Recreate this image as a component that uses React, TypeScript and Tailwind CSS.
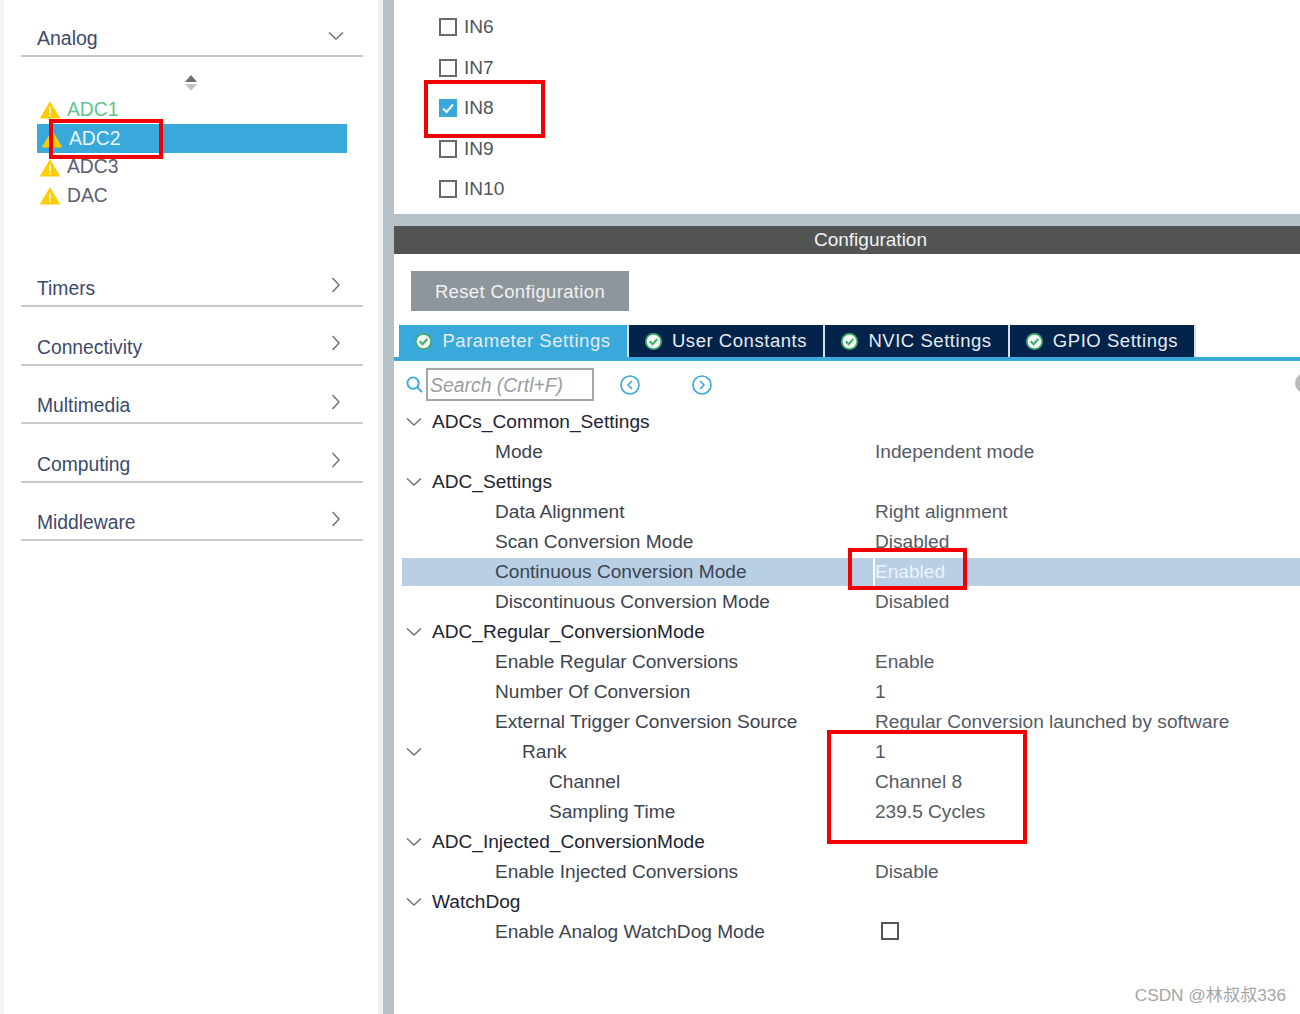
import React from "react";

const font = { fontFamily: '"Liberation Sans", "Noto Sans CJK SC", sans-serif' };

const Warn = () => (
  <svg viewBox="0 0 20 18" className="w-[20px] h-[18px] shrink-0">
    <path d="M10 1 L19.5 17 H0.5 Z" fill="#ffcc00" stroke="#ffcc00" strokeWidth="1" strokeLinejoin="round" />
    <rect x="9.2" y="6" width="1.6" height="6.5" fill="#fff" />
    <rect x="9.2" y="13.6" width="1.6" height="1.8" fill="#fff" />
  </svg>
);

const Chevron = ({ dir = "down", className = "" }: { dir?: "down" | "right"; className?: string }) => (
  <svg viewBox="0 0 16 16" className={`w-[16px] h-[16px] ${className}`} fill="none" stroke="#6b6f76" strokeWidth="1.4">
    {dir === "down" ? <path d="M1 4.5 L8 11 L15 4.5" /> : <path d="M4.5 1 L11 8 L4.5 15" />}
  </svg>
);

const Check = () => (
  <svg viewBox="0 0 18 18" className="w-[17px] h-[17px] shrink-0">
    <circle cx="9" cy="9" r="9" fill="#3fae6e" />
    <circle cx="9" cy="9" r="7.2" fill="#f4f8f6" />
    <path d="M5 8.8 L8 11.8 L13 6.4" fill="none" stroke="#3fae6e" strokeWidth="2.2" />
  </svg>
);

const Section = ({ label }: { label: string }) => (
  <div className="mt-[23.5px] h-[35px] flex items-center justify-between border-b-2 border-[#c5cbd0] pl-[16px] pr-[19px] pt-[2px]">
    <span className="text-[19.3px] text-[#3b4a6b]">{label}</span>
    <Chevron dir="right" className="-mt-[10px]" />
  </div>
);

const In = ({ label, on }: { label: string; on?: boolean }) => (
  <div className="h-[40.5px] flex items-center gap-[7px] pl-[45px]">
    {on ? (
      <span className="w-[18px] h-[18px] bg-[#39a9dc] flex items-center justify-center">
        <svg viewBox="0 0 18 18" className="w-[18px] h-[18px]" fill="none" stroke="#fff" strokeWidth="2">
          <path d="M4 9.5 L7.5 13 L14 5.5" />
        </svg>
      </span>
    ) : (
      <span className="w-[18px] h-[18px] border-2 border-[#6a6a6a]" />
    )}
    <span className="text-[19.1px] text-[#4f5560] mt-[1px]">{label}</span>
  </div>
);

const Tab = ({ label, active, w }: { label: string; active?: boolean; w: string }) => (
  <div
    className={`h-[32px] flex items-center justify-center gap-[10px] border-r-2 border-[#d8dfe4] tracking-[0.54px] text-[18.5px] text-[#e6ecf1] ${w} ${
      active ? "bg-[#39a9dc]" : "bg-[#03234b]"
    }`}
  >
    <Check />
    <span>{label}</span>
  </div>
);

type Row = { label: string; value?: string; indent: number; chev?: boolean; head?: boolean; sel?: boolean; box?: boolean };

const rows: Row[] = [
  { label: "ADCs_Common_Settings", indent: 30, chev: true, head: true },
  { label: "Mode", value: "Independent mode", indent: 93 },
  { label: "ADC_Settings", indent: 30, chev: true, head: true },
  { label: "Data Alignment", value: "Right alignment", indent: 93 },
  { label: "Scan Conversion Mode", value: "Disabled", indent: 93 },
  { label: "Continuous Conversion Mode", value: "Enabled", indent: 93, sel: true },
  { label: "Discontinuous Conversion Mode", value: "Disabled", indent: 93 },
  { label: "ADC_Regular_ConversionMode", indent: 30, chev: true, head: true },
  { label: "Enable Regular Conversions", value: "Enable", indent: 93 },
  { label: "Number Of Conversion", value: "1", indent: 93 },
  { label: "External Trigger Conversion Source", value: "Regular Conversion launched by software", indent: 93 },
  { label: "Rank", value: "1", indent: 120, chev: true },
  { label: "Channel", value: "Channel 8", indent: 147 },
  { label: "Sampling Time", value: "239.5 Cycles", indent: 147 },
  { label: "ADC_Injected_ConversionMode", indent: 30, chev: true, head: true },
  { label: "Enable Injected Conversions", value: "Disable", indent: 93 },
  { label: "WatchDog", indent: 30, chev: true, head: true },
  { label: "Enable Analog WatchDog Mode", indent: 93, box: true },
];

const RedBox = ({ className }: { className: string }) => (
  <div className={`absolute border-[4px] border-[#f00000] ${className}`} />
);

export default function App() {
  return (
    <div className="relative w-[1300px] h-[1014px] overflow-hidden bg-white flex" style={font}>
      {/* Left panel */}
      <aside className="w-[383px] h-full shrink-0 pl-[17px] pr-[15px] border-l-[4px] border-r-[5px] border-l-[#f5f6f7] border-r-[#eef1f3] box-border">
        <div className="h-[57px] flex items-center justify-between border-b-2 border-[#c5cbd0] pl-[16px] pr-[19px] pt-[22px]">
          <span className="text-[19.5px] text-[#3b4a6b]">Analog</span>
          <Chevron className="-mt-[5px]" />
        </div>
        <div className="h-[38px] flex items-center justify-center pr-[3px] pt-[14px]">
          <svg viewBox="0 0 12 16" className="w-[12px] h-[16px]">
            <path d="M6 0 L12 7 H0 Z" fill="#6e6e6e" />
            <path d="M6 16 L12 9 H0 Z" fill="#c4c4c4" />
          </svg>
        </div>
        <div className="text-[19.3px]">
          <div className="h-[28.5px] flex items-center gap-[7px] pl-[19px] pt-[2px] text-[#5fc48f]"><Warn /><span>ADC1</span></div>
          <div className="h-[29px] flex items-center gap-[7px] pl-[5px] pt-[2px] ml-[16px] mr-[16px] bg-[#39a9dc] text-[#eaf6fc]"><Warn /><span>ADC2</span></div>
          <div className="h-[28.5px] flex items-center gap-[7px] pl-[19px] pt-[2px] text-[#5a6070]"><Warn /><span>ADC3</span></div>
          <div className="h-[28.5px] flex items-center gap-[7px] pl-[19px] pt-[2px] text-[#5a6070]"><Warn /><span>DAC</span></div>
        </div>
        <div className="h-[39px]" />
        {["Timers", "Connectivity", "Multimedia", "Computing", "Middleware"].map((s) => (
          <Section key={s} label={s} />
        ))}
      </aside>

      {/* Divider */}
      <div className="w-[11px] h-full shrink-0 bg-[#b6c1c8]" />

      {/* Right panel */}
      <main className="flex-1 h-full min-w-0 flex flex-col">
        <div className="h-[214px] pt-[7px]">
          <In label="IN6" />
          <In label="IN7" />
          <In label="IN8" on />
          <In label="IN9" />
          <In label="IN10" />
        </div>
        <div className="h-[12px] bg-[#b6c1c8]" />
        <div className="h-[28px] bg-[#535554] text-[#f0f3f5] text-[19px] flex items-center justify-center pl-[47px] pt-[1px]">Configuration</div>
        <div className="pl-[17px] pt-[17px]">
          <button className="w-[218px] h-[40px] pt-[1px] bg-[#8f969b] text-[#f0f2f3] text-[18.5px] tracking-[0.35px]">Reset Configuration</button>
        </div>
        <div className="mt-[14px] pl-[5px] border-b-[4px] border-[#39a9dc] flex">
          <Tab label="Parameter Settings" active w="w-[230px]" />
          <Tab label="User Constants" w="w-[196px]" />
          <Tab label="NVIC Settings" w="w-[185px]" />
          <Tab label="GPIO Settings" w="w-[186px]" />
        </div>
        <div className="relative h-[45.5px] flex items-center pl-[12px] pt-[2px]">
          <svg viewBox="0 0 18 18" className="w-[17px] h-[17px] shrink-0" fill="none" stroke="#39a9dc" strokeWidth="2">
            <circle cx="7.5" cy="7.5" r="6" />
            <path d="M12 12 L17 17" />
          </svg>
          <div className="w-[168px] h-[33px] ml-[3px] border-2 border-[#a3a7aa] flex items-center pl-[2px] pt-[1px] text-[19.4px] italic text-[#9a9ea3]">
            Search (Crtl+F)
          </div>
          <svg viewBox="0 0 20 20" className="w-[20px] h-[20px] ml-[26px]" fill="none" stroke="#39a9dc" strokeWidth="1.6">
            <circle cx="10" cy="10" r="9" />
            <path d="M12 6 L8 10 L12 14" />
          </svg>
          <svg viewBox="0 0 20 20" className="w-[20px] h-[20px] ml-[52px]" fill="none" stroke="#39a9dc" strokeWidth="1.6">
            <circle cx="10" cy="10" r="9" />
            <path d="M8 6 L12 10 L8 14" />
          </svg>
          <span className="absolute right-[-15px] top-[12px] w-[20px] h-[20px] rounded-full bg-[#b9bbbd]" />
        </div>
        <div className="pl-[8px]">
          {rows.map((r) => (
            <div key={r.label} className={`h-[30px] flex items-center ${r.sel ? "bg-[#b8cfe6] border-y border-white" : ""}`}>
              <div className="w-[473px] h-full relative flex items-center shrink-0">
                {r.chev && <Chevron className="absolute left-[4px] top-[7px]" />}
                <span
                  className={`text-[19.1px] whitespace-nowrap mt-[1px] ${r.head ? "text-[#1c2433]" : "text-[#3d4450]"} ${
                    r.indent === 30 ? "pl-[30px]" : r.indent === 93 ? "pl-[93px]" : r.indent === 120 ? "pl-[120px]" : "pl-[147px]"
                  }`}
                >
                  {r.label}
                </span>
              </div>
              {r.value && (
                <span className={`text-[19.1px] whitespace-nowrap ${r.sel ? "text-[#eef3f9] border-l-2 border-white h-full flex items-center -ml-[2px] pt-[1px]" : "text-[#555b66] mt-[1px]"}`}>
                  {r.value}
                </span>
              )}
              {r.box && <span className="ml-[6px] -mt-[1px] w-[18px] h-[18px] border-2 border-[#555]" />}
            </div>
          ))}
        </div>
      </main>

      {/* Red annotations over the screenshot */}
      <RedBox className="left-[49px] top-[119px] w-[114px] h-[40px]" />
      <RedBox className="left-[424px] top-[80px] w-[121px] h-[58px]" />
      <RedBox className="left-[848px] top-[548px] w-[119px] h-[42px]" />
      <RedBox className="left-[827px] top-[730px] w-[200px] h-[114px]" />
      <div className="absolute right-[14px] bottom-[5px] text-[17.2px] text-[#a6a6a6]">CSDN @林叔叔336</div>
    </div>
  );
}
